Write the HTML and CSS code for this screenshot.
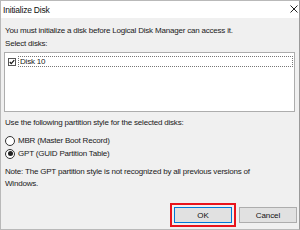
FILE: index.html
```html
<!DOCTYPE html>
<html>
<head>
<meta charset="utf-8">
<link rel="stylesheet" href="styles.css">
</head>
<body>
<div class="window">
  <div class="titlebar">
    <span class="title">Initialize Disk</span>
    <svg class="close" width="8" height="8" viewBox="0 0 8 8"><path d="M0.5 0.5 L7.5 7.5 M7.5 0.5 L0.5 7.5" stroke="#222" stroke-width="1" fill="none"/></svg>
  </div>
  <div class="content">
    <div class="line msg">You must initialize a disk before Logical Disk Manager can access it.</div>
    <div class="line label">Select disks:</div>
    <div class="listbox">
      <div class="item">
        <span class="check"><svg width="8" height="8" viewBox="0 0 8 8"><path d="M1 4 L3 6.2 L7 1.5" stroke="#111" stroke-width="1.6" fill="none"/></svg></span>
        <span class="item-text">Disk 10</span>
      </div>
    </div>
    <div class="line partition">Use the following partition style for the selected disks:</div>
    <div class="radio-row first"><span class="radio"></span><span>MBR (Master Boot Record)</span></div>
    <div class="radio-row"><span class="radio checked"></span><span>GPT (GUID Partition Table)</span></div>
    <div class="line note">Note: The GPT partition style is not recognized by all previous versions of</div>
    <div class="line">Windows.</div>
    <div class="buttons">
      <button class="btn default">OK</button>
      <button class="btn">Cancel</button>
    </div>
  </div>
</div>
</body>
</html>
```
FILE: styles.css
```css
html, body {
  margin: 0;
  padding: 0;
}
body {
  width: 300px;
  height: 230px;
  font-family: "Liberation Sans", Arial, sans-serif;
  font-size: 8px;
  letter-spacing: -0.2px;
  color: #1a1a1a;
}
.window {
  box-sizing: border-box;
  width: 300px;
  height: 230px;
  border: 1px solid #b9b9b9;
  border-right-color: #9a9a9a;
  background: #f0f0f0;
  display: flex;
  flex-direction: column;
}
.titlebar {
  height: 17px;
  background: #ffffff;
  display: flex;
  align-items: center;
  justify-content: space-between;
  padding: 0 1px 0 2px;
  flex-shrink: 0;
}
.title {
  font-size: 8.5px;
  color: #111;
}
.close {
  margin-top: -1px;
}
.content {
  flex: 1;
  padding: 0 2px 0 3px;
  display: flex;
  flex-direction: column;
}
.line {
  line-height: 12px;
  height: 12px;
  padding-left: 1px;
  white-space: nowrap;
}
.msg {
  margin-top: 7px;
}
.label {
  margin-top: 1px;
}
.listbox {
  margin-top: 2px;
  margin-right: 2px;
  height: 60px;
  box-sizing: border-box;
  border: 1px solid #adadad;
  background: #ffffff;
  padding: 3px 1px 0 2px;
}
.item {
  display: flex;
  align-items: center;
  height: 11px;
}
.check {
  width: 8px;
  height: 8px;
  box-sizing: border-box;
  border: 1px solid #555;
  display: flex;
  align-items: center;
  justify-content: center;
  margin-left: 1px;
  margin-right: 2px;
}
.check svg {
  display: block;
}
.item-text {
  flex: 1;
  height: 11px;
  line-height: 9px;
  box-sizing: border-box;
  border: 1px dotted #777;
  padding-left: 1px;
}
.partition {
  margin-top: 5px;
}
.radio-row {
  display: flex;
  align-items: center;
  height: 13px;
  line-height: 13px;
  white-space: nowrap;
}
.radio-row.first {
  margin-top: 5px;
}
.radio {
  width: 10px;
  height: 10px;
  box-sizing: border-box;
  border: 1px solid #333;
  border-radius: 50%;
  background: #fff;
  margin-left: 1px;
  margin-right: 3px;
  display: flex;
  align-items: center;
  justify-content: center;
}
.radio.checked::after {
  content: "";
  width: 5px;
  height: 5px;
  border-radius: 50%;
  background: #222;
}
.note {
  margin-top: 6px;
}
.buttons {
  margin-top: 17px;
  display: flex;
  justify-content: flex-end;
  gap: 7px;
}
.btn {
  width: 58px;
  height: 16px;
  box-sizing: border-box;
  border: 1px solid #adadad;
  background: #e1e1e1;
  font-family: "Liberation Sans", Arial, sans-serif;
  font-size: 8px;
  letter-spacing: -0.1px;
  color: #111;
  padding: 0;
  margin: 0;
}
.btn.default {
  border-color: #0078d7;
  outline: 2px solid #e8141c;
  outline-offset: 2px;
}
```
